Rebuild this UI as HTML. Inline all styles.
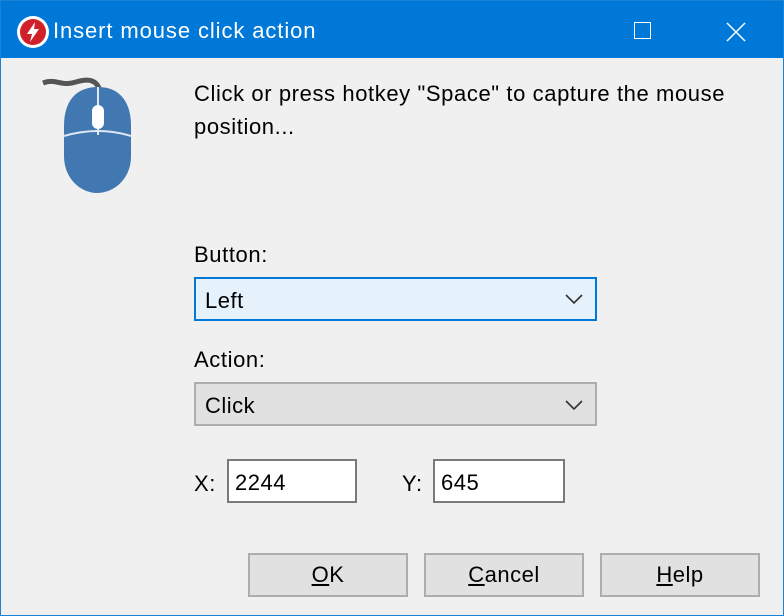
<html><head><style>
body{margin:0;width:784px;height:616px;overflow:hidden;font-family:"Liberation Sans",sans-serif;}
.win{position:absolute;left:0;top:0;width:782px;height:614px;border:1px solid #1883d7;background:#f0f0f0;}
.tb{position:absolute;left:0;top:0;width:782px;height:57px;background:#0078d7;color:#fff;}
.t{position:absolute;font-size:22px;letter-spacing:0.6px;color:#000;white-space:nowrap}
.box{position:absolute;box-sizing:border-box;font-size:22px;letter-spacing:0.5px}
.cb{background:#e1e1e1;border:1px solid #adadad;}
.btn{position:absolute;box-sizing:border-box;background:#e1e1e1;border:2px solid #adadad;font-size:22px;letter-spacing:0.5px;text-align:center;line-height:40px;width:160px;height:44px;top:552px}
.ed{background:#fff;border:2px solid #7a7a7a;}
</style></head><body><div class="win">
<div class="tb">
<svg style="position:absolute;left:15px;top:14px" width="34" height="34" viewBox="0 0 34 34"><circle cx="17" cy="17" r="16" fill="#fff"/><circle cx="17" cy="17" r="13" fill="#d0202a"/><path d="M19 7 L11 19 L16 19 L14 27 L23 14 L18 14 Z" fill="#fff"/></svg>
<div style="position:absolute;left:52px;top:17px;font-size:22px;letter-spacing:0.9px">Insert mouse click action</div>
<div style="position:absolute;left:633px;top:21px;width:17px;height:17px;border:1.5px solid #fff;box-sizing:border-box"></div>
<svg style="position:absolute;left:725px;top:21px" width="20" height="20"><path d="M1 1L19 19M19 1L1 19" stroke="#fff" stroke-width="1.5"/></svg>
</div>
<svg style="position:absolute;left:38px;top:75px" width="100" height="120" viewBox="38 75 100 120">
<path d="M42 82 C55 77 60 86 75 81 C88 77 96 79 99 90" stroke="#555" stroke-width="5" fill="none"/>
<path d="M97 86 C75 86 63 100 63 125 L63 155 C63 178 80 192 96 192 C113 192 130 178 130 155 L130 125 C130 100 118 86 97 86Z" fill="#4178b2"/>
<path d="M63 135 Q97 125 130 135" stroke="#dfe8f2" stroke-width="2" fill="none"/>
<line x1="97" y1="86" x2="97" y2="134" stroke="#dfe8f2" stroke-width="2"/>
<rect x="91" y="104" width="12" height="24" rx="6" fill="#fff"/>
</svg>
<div class="t" style="left:193px;top:80px">Click or press hotkey "Space" to capture the mouse</div>
<div class="t" style="left:193px;top:113px">position...</div>
<div class="t" style="left:193px;top:241px">Button:</div>
<div class="box" style="left:193px;top:276px;width:403px;height:44px;background:#e5f1fb;border:2px solid #0078d7;padding:9px 0 0 9px">Left</div>
<div class="t" style="left:193px;top:346px">Action:</div>
<div class="box cb" style="left:193px;top:381px;width:403px;height:44px;border-width:2px;padding:9px 0 0 9px">Click</div>
<svg style="position:absolute;left:564px;top:292px" width="18" height="12"><path d="M1 2L9 10L17 2" stroke="#333" stroke-width="1.6" fill="none"/></svg>
<svg style="position:absolute;left:564px;top:398px" width="18" height="12"><path d="M1 2L9 10L17 2" stroke="#333" stroke-width="1.6" fill="none"/></svg>
<div class="t" style="left:193px;top:470px">X:</div>
<div class="box ed" style="left:226px;top:458px;width:130px;height:44px;padding:9px 0 0 6px">2244</div>
<div class="t" style="left:401px;top:470px">Y:</div>
<div class="box ed" style="left:432px;top:458px;width:132px;height:44px;padding:9px 0 0 6px">645</div>
<div class="btn" style="left:247px"><u>O</u>K</div>
<div class="btn" style="left:423px"><u>C</u>ancel</div>
<div class="btn" style="left:599px"><u>H</u>elp</div>
</div></body></html>
